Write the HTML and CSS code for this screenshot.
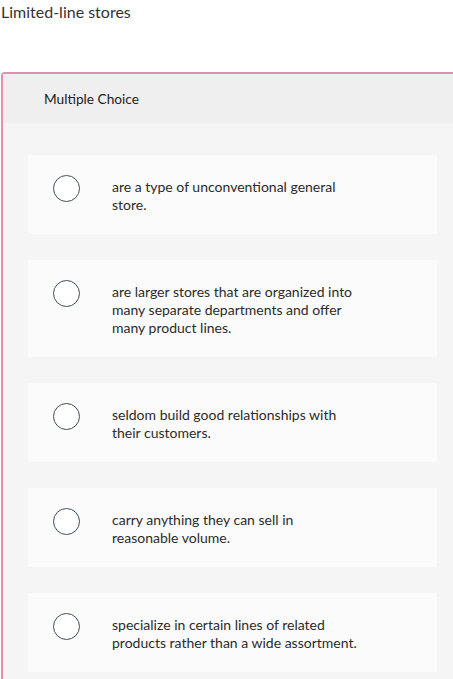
FILE: index.html
```html
<!DOCTYPE html>
<html>
<head>
<meta charset="utf-8">
<link rel="stylesheet" href="styles.css">
</head>
<body>
<div class="title">Limited-line stores</div>
<div class="card">
  <div class="card-head">Multiple Choice</div>
  <div class="card-body">
    <div class="option"><span class="radio"></span><div class="text">are a type of unconventional general store.</div></div>
    <div class="option"><span class="radio"></span><div class="text">are larger stores that are organized into many separate departments and offer many product lines.</div></div>
    <div class="option"><span class="radio"></span><div class="text">seldom build good relationships with their customers.</div></div>
    <div class="option"><span class="radio"></span><div class="text">carry anything they can sell in reasonable volume.</div></div>
    <div class="option"><span class="radio"></span><div class="text">specialize in certain lines of related products rather than a wide assortment.</div></div>
  </div>
</div>
</body>
</html>
```
FILE: styles.css
```css
html, body {
  margin: 0;
  padding: 0;
  background: #fff;
  font-family: Lato, "Open Sans", sans-serif;
  color: #2b2b2b;
  overflow: hidden;
}
.title {
  font-size: 16px;
  line-height: 22px;
  padding: 1px 0 0 1px;
  color: #333;
}
.card {
  margin: 49px -20px 0 1px;
  border-top: 2px solid #e58fae;
  border-left: 2px solid #e58fae;
  border-top-left-radius: 4px;
}
.card-head {
  background: #efefef;
  height: 49px;
  padding-left: 41px;
  font-size: 13.7px;
  line-height: 49px;
  color: #222;
}
.card-body {
  background: #f5f5f5;
  padding: 32px 35px 20px 25px;
  display: flex;
  flex-direction: column;
  gap: 26px;
}
.option {
  background: #fbfbfb;
  width: 409px;
  padding: 23px 0 20px 0;
  display: flex;
  align-items: flex-start;
}
.radio {
  width: 25px;
  height: 25px;
  border: 1.3px solid #3f4d5c;
  border-radius: 50%;
  margin: -3px 0 0 25px;
  flex: none;
  background: #fff;
}
.text {
  margin-left: 32px;
  width: 250px;
  font-size: 14px;
  line-height: 18px;
  color: #2b2b2b;
}
```
